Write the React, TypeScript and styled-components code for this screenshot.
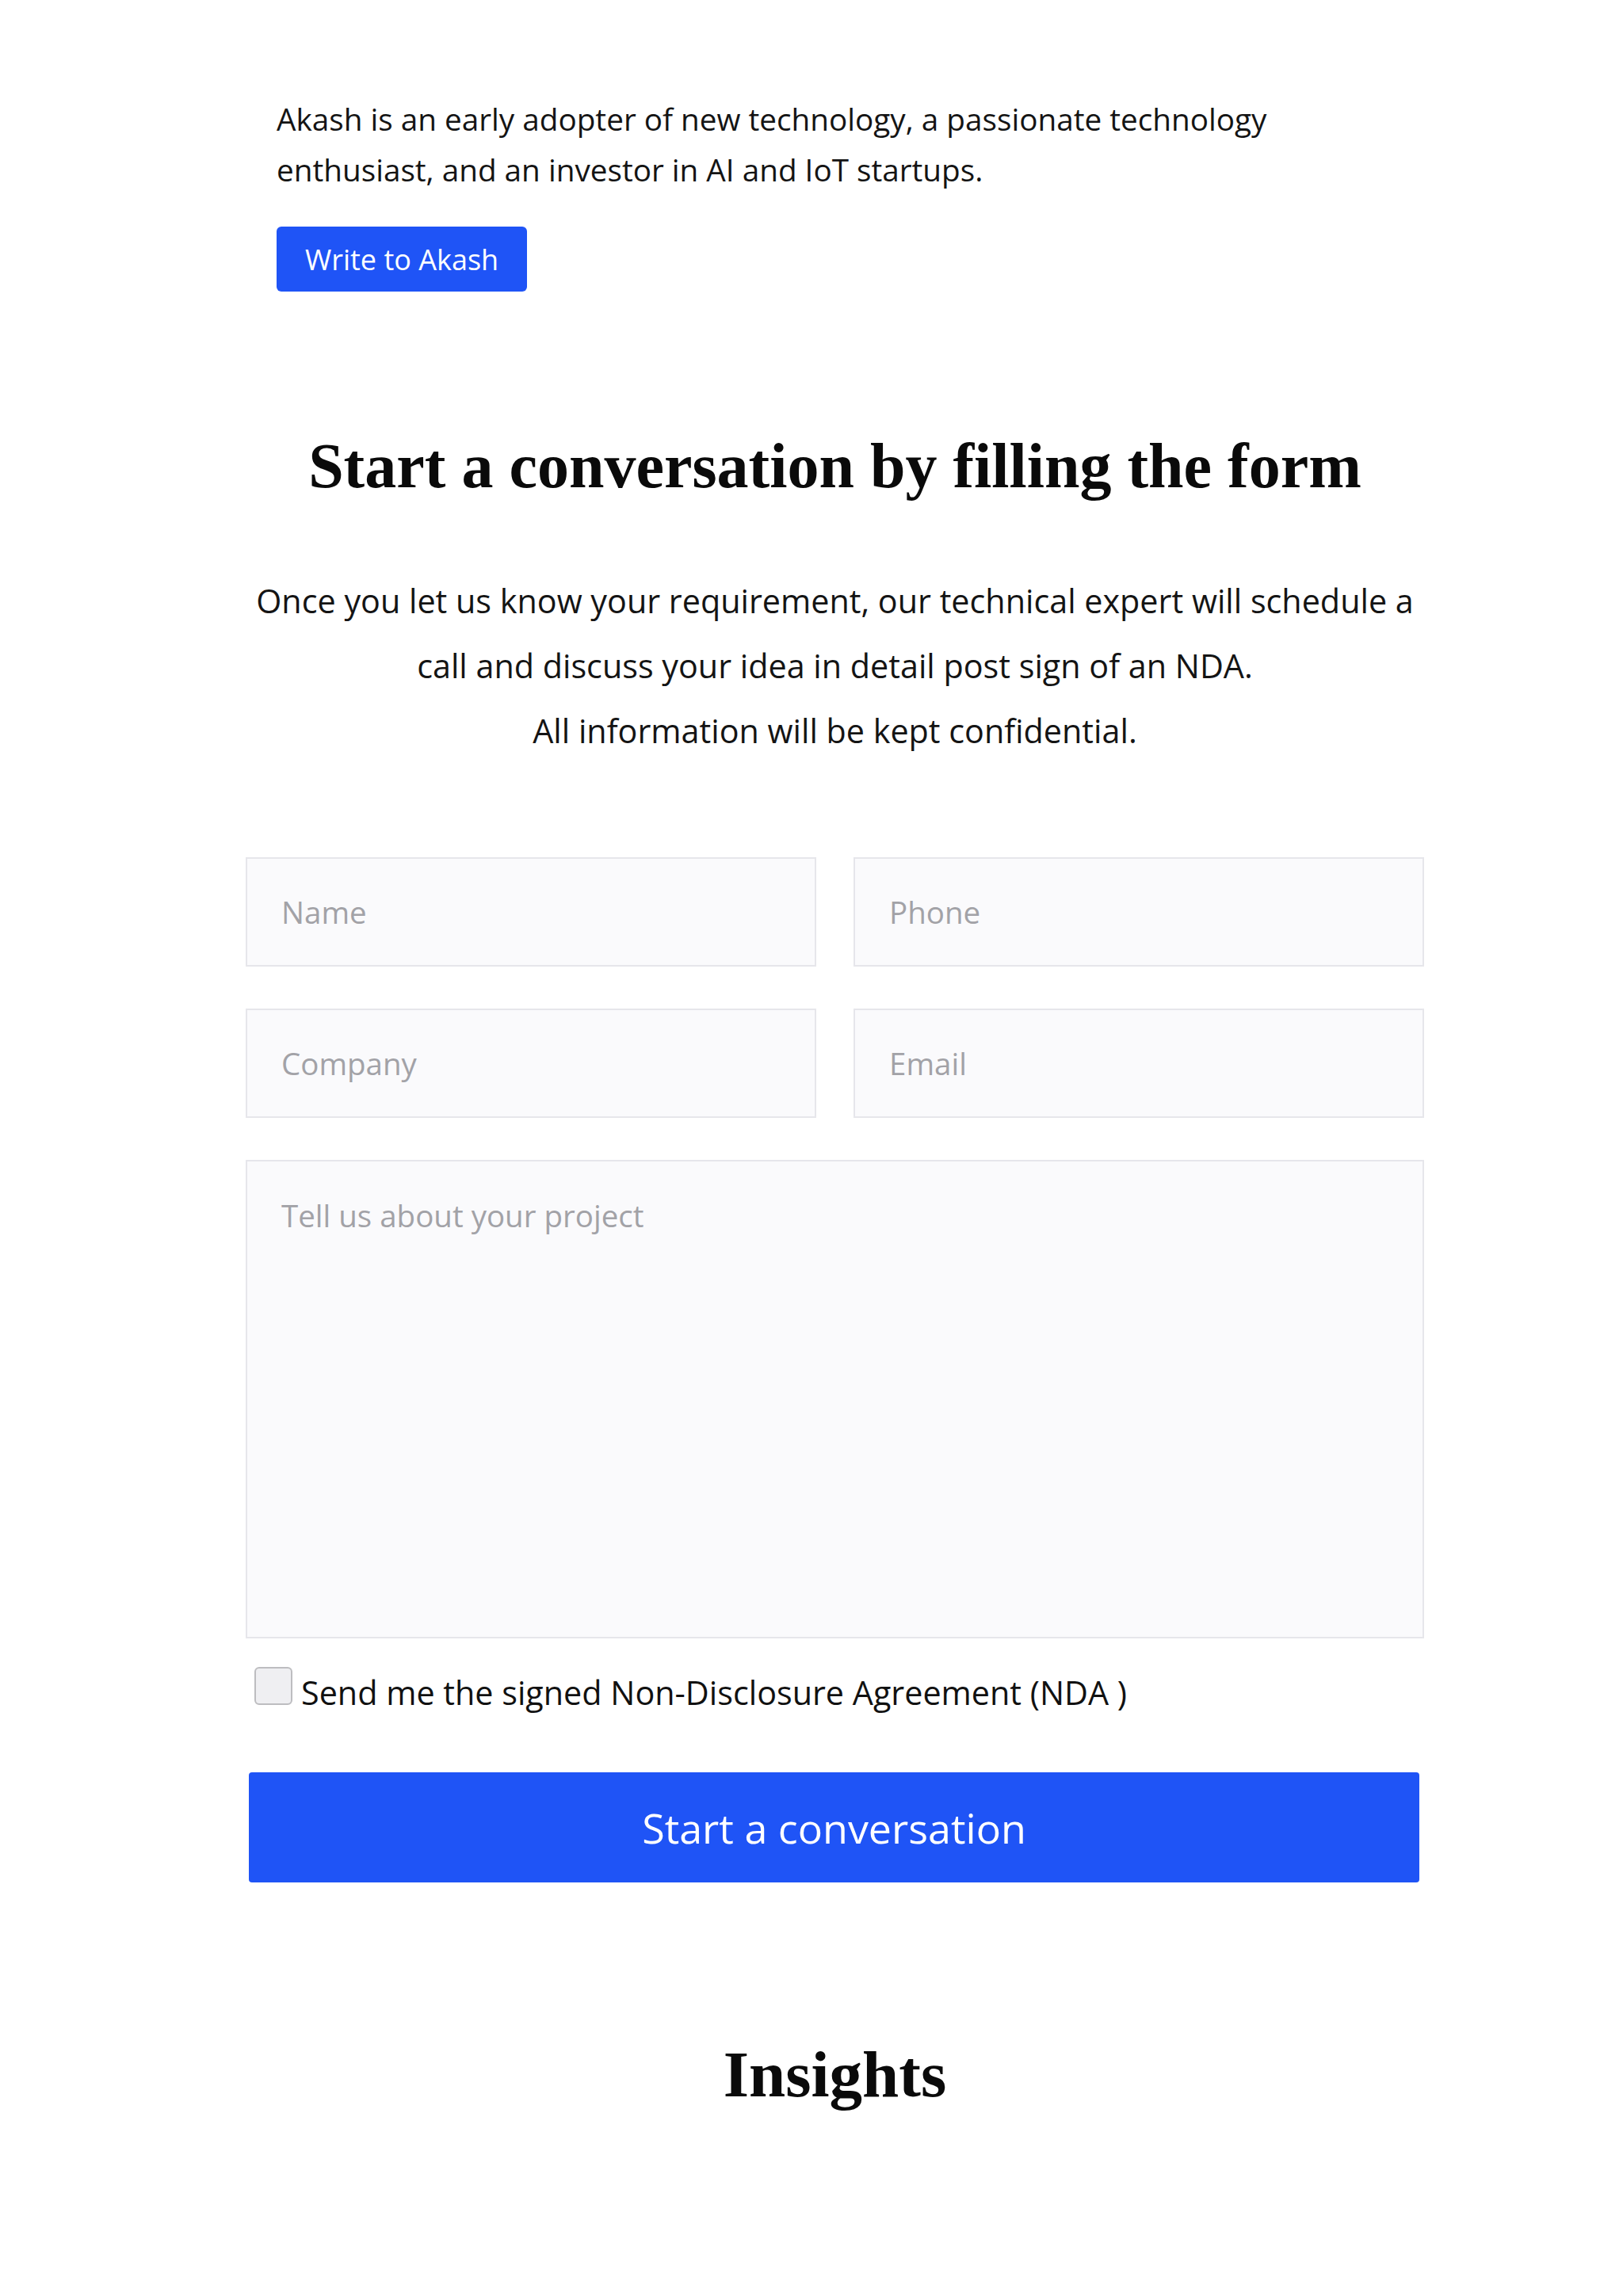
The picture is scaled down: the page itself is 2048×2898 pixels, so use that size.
import React from 'react'
import styled, { createGlobalStyle } from 'styled-components'

const GlobalStyle = createGlobalStyle`
  html, body {
    margin: 0;
    padding: 0;
    background: #ffffff;
  }
  body {
    font-family: 'Open Sans', 'Noto Sans', sans-serif;
    color: #111111;
  }
`

const BLUE = '#1f54f6'

const Page = styled.div`
  width: 1487px;
  margin-left: 310px;
  padding-top: 118px;
  padding-bottom: 220px;
`

const Bio = styled.div`
  padding-left: 39px;
`

const BioText = styled.p`
  margin: 0;
  font-size: 38.7px;
  line-height: 64px;
  color: #141414;
`

const WriteButton = styled.button`
  margin-top: 40px;
  height: 82px;
  padding: 0 36px;
  border: none;
  border-radius: 6px;
  background: ${BLUE};
  color: #ffffff;
  font-family: 'Open Sans', sans-serif;
  font-size: 36px;
  cursor: pointer;
`

const Heading = styled.h2<{ $top: number; $size: number }>`
  margin: ${(p) => p.$top}px 0 0;
  text-align: center;
  font-family: 'Liberation Serif', 'Times New Roman', serif;
  font-weight: 700;
  font-size: ${(p) => p.$size}px;
  line-height: 96px;
  color: #0a0a0a;
`

const Intro = styled.p`
  margin: 81px 0 0;
  text-align: center;
  font-size: 41.3px;
  line-height: 82px;
  color: #141414;
`

const Form = styled.form`
  margin-top: 119px;
  display: grid;
  grid-template-columns: 1fr 1fr;
  column-gap: 47px;
  row-gap: 53px;
`

const fieldBase = `
  box-sizing: border-box;
  width: 100%;
  border: 2px solid #e6e6eb;
  background: #fafafc;
  font-family: 'Open Sans', sans-serif;
  font-size: 38.5px;
  color: #333;
  padding-left: 43px;
  outline: none;
  &::placeholder {
    color: #a2a2a7;
  }
`

const Field = styled.input`
  ${fieldBase}
  height: 138px;
`

const Message = styled.textarea`
  ${fieldBase}
  grid-column: 1 / -1;
  height: 604px;
  padding-top: 40px;
  line-height: 57px;
  resize: none;
`

const NdaRow = styled.label`
  grid-column: 1 / -1;
  margin-top: -17px;
  display: flex;
  align-items: flex-start;
  gap: 11px;
  padding-left: 11px;
  font-size: 41.3px;
  line-height: 50px;
  color: #111;
  cursor: pointer;
`

const NdaText = styled.span`
  margin-top: 7px;
`

const Check = styled.input`
  appearance: none;
  margin: 0;
  width: 48px;
  height: 48px;
  flex: none;
  box-sizing: border-box;
  border: 2px solid #bdbdc0;
  border-radius: 6px;
  background: #efeff2;
`

const Submit = styled.button`
  grid-column: 1 / -1;
  margin: 23px 6px 0 4px;
  height: 139px;
  border: none;
  border-radius: 4px;
  background: ${BLUE};
  color: #ffffff;
  font-family: 'Open Sans', sans-serif;
  font-size: 52px;
  cursor: pointer;
`

export default function App() {
  return (
    <>
      <GlobalStyle />
      <Page>
        <Bio>
          <BioText>
            Akash is an early adopter of new technology, a passionate technology
            <br />
            enthusiast, and an investor in AI and IoT startups.
          </BioText>
          <WriteButton type="button">Write to Akash</WriteButton>
        </Bio>

        <Heading $top={172} $size={80}>
          Start a conversation by filling the form
        </Heading>
        <Intro>
          Once you let us know your requirement, our technical expert will schedule a
          <br />
          call and discuss your idea in detail post sign of an NDA.
          <br />
          All information will be kept confidential.
        </Intro>

        <Form onSubmit={(e) => e.preventDefault()}>
          <Field placeholder="Name" />
          <Field placeholder="Phone" />
          <Field placeholder="Company" />
          <Field placeholder="Email" />
          <Message placeholder="Tell us about your project" />
          <NdaRow>
            <Check type="checkbox" />
            <NdaText>Send me the signed Non-Disclosure Agreement (NDA )</NdaText>
          </NdaRow>
          <Submit type="submit">Start a conversation</Submit>
        </Form>

        <Heading $top={194} $size={83}>
          Insights
        </Heading>
      </Page>
    </>
  )
}
